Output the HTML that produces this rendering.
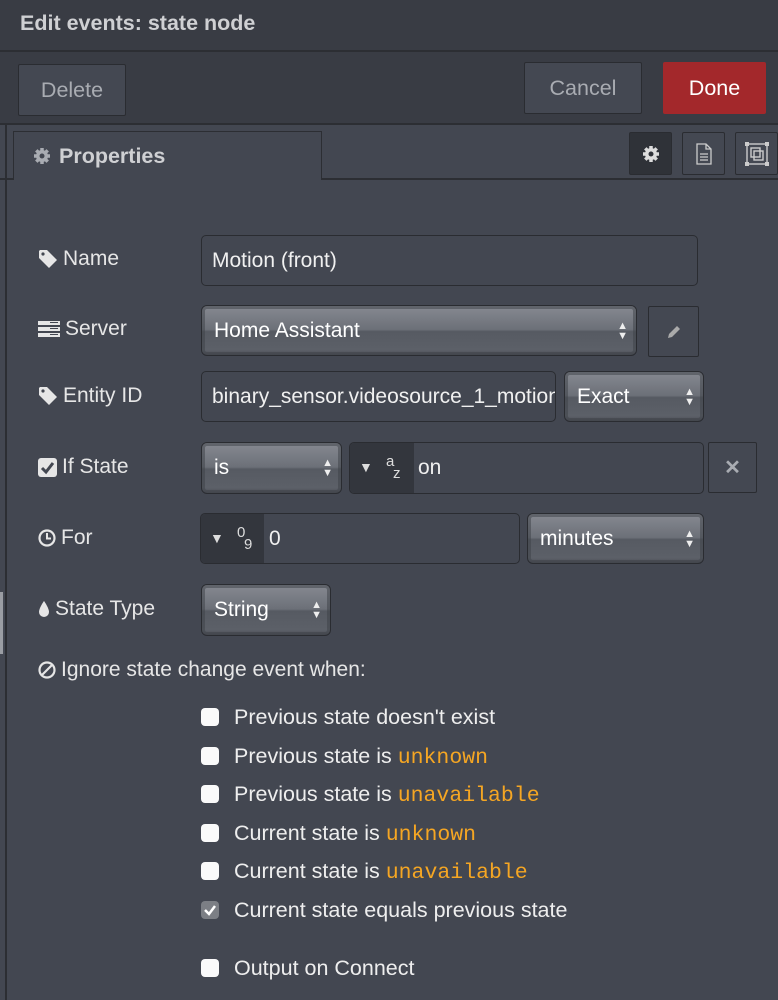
<!DOCTYPE html>
<html><head><meta charset="utf-8"><style>
*{box-sizing:border-box;margin:0;padding:0}
body{width:778px;height:1000px;background:#434751;font-family:"Liberation Sans",sans-serif;color:#e6e6e6;position:relative;overflow:hidden;font-size:21px}
.abs{position:absolute}
.hdr{left:0;top:0;width:778px;height:52px;background:#393c44;border-bottom:2px solid #2c2e33}
.bar{left:0;top:52px;width:778px;height:73px;background:#393c44;border-bottom:2px solid #2c2e33}
.btn{border:1px solid #2a2c31;background:#444852;color:#a9acb2;display:flex;align-items:center;justify-content:center;border-radius:2px;font-size:21.5px}
.lbl{left:38px;font-size:21px;color:#e6e6e6;display:flex;align-items:center;gap:5px;height:24px}
.inp{border:1px solid #2a2c31;border-radius:5px;background:#434751;display:flex;align-items:center;padding-left:10px;color:#f0f0f0;overflow:hidden;white-space:nowrap;font-size:21px}
.sel{border:1px solid #2a2c31;border-radius:6px;background:linear-gradient(#868991 0%,#6c7078 48%,#565a62 52%,#5c6068 90%,#4a4d55 100%);display:flex;align-items:center;padding-left:12px;color:#fff;box-shadow:inset 0 0 0 3px rgba(60,63,70,.5);font-size:21px}
.arr{position:absolute;right:8px;top:50%;transform:translateY(-50%);font-size:11px;line-height:10px;color:#eee;text-align:center}
.pre{background:#33363d;height:100%;display:flex;align-items:center;justify-content:center;color:#ddd;font-size:14px;position:relative}
.cb{left:201px;width:18px;height:18px;background:#fafafa;border-radius:4px}
.ct{left:234px;font-size:21.5px;color:#eee;height:24px;line-height:24px;white-space:nowrap}
.m{font-family:"Liberation Mono",monospace;color:#f5a623;font-size:21.5px}
</style></head><body>
<div class="abs" style="left:5px;top:0;width:2px;height:1000px;background:#2c2e33"></div>
<div class="abs" style="left:0;top:592px;width:3px;height:62px;background:#9a9da3"></div>
<div class="abs hdr"></div>
<div class="abs" style="left:20px;top:11px;font-weight:bold;font-size:21.5px;color:#cfd0d3">Edit events: state node</div>
<div class="abs bar"></div>
<div class="abs btn" style="left:18px;top:64px;width:108px;height:52px">Delete</div>
<div class="abs btn" style="left:524px;top:62px;width:118px;height:52px">Cancel</div>
<div class="abs btn" style="left:663px;top:62px;width:103px;height:52px;background:#a3282b;border-color:#a3282b;color:#fff">Done</div>
<div class="abs" style="left:0;top:178px;width:778px;height:2px;background:#2c2e33"></div>
<div class="abs" style="left:13px;top:131px;width:309px;height:49px;background:#434751;border:1px solid #2c2e33;border-bottom:none;display:flex;align-items:center;padding-left:19px;font-weight:bold;color:#cfd0d3;gap:8px;font-size:21.5px">
<svg width="18" height="18" viewBox="0 0 18 18"><g stroke="#a9acb2" stroke-width="3.5"><line x1="9" y1="1" x2="9" y2="17"/><line x1="1" y1="9" x2="17" y2="9"/><line x1="3.3" y1="3.3" x2="14.7" y2="14.7"/><line x1="14.7" y1="3.3" x2="3.3" y2="14.7"/></g><circle cx="9" cy="9" r="6" fill="#a9acb2"/><circle cx="9" cy="9" r="2.5" fill="#434751"/></svg>Properties</div>
<div class="abs btn" style="left:629px;top:132px;width:43px;height:43px;background:#2f3238"><svg width="18" height="18" viewBox="0 0 18 18"><g stroke="#ddd" stroke-width="3.5"><line x1="9" y1="1" x2="9" y2="17"/><line x1="1" y1="9" x2="17" y2="9"/><line x1="3.3" y1="3.3" x2="14.7" y2="14.7"/><line x1="14.7" y1="3.3" x2="3.3" y2="14.7"/></g><circle cx="9" cy="9" r="6" fill="#ddd"/><circle cx="9" cy="9" r="2.5" fill="#2f3238"/></svg></div>
<div class="abs btn" style="left:682px;top:132px;width:43px;height:43px"><svg width="16" height="22" viewBox="0 0 16 22"><path d="M1 1H10L15 6V21H1Z M10 1V6H15" fill="none" stroke="#ccc" stroke-width="1.3"/><path d="M4 11H12M4 14H12M4 17H12" stroke="#ccc" stroke-width="1.2"/></svg></div>
<div class="abs btn" style="left:735px;top:132px;width:43px;height:43px"><svg width="26" height="26" viewBox="0 0 26 26"><rect x="3" y="3" width="20" height="20" fill="none" stroke="#ccc" stroke-width="1.4"/><rect x="7" y="7" width="9" height="9" fill="none" stroke="#ccc" stroke-width="1.4"/><rect x="10" y="10" width="9" height="9" fill="none" stroke="#ccc" stroke-width="1.4"/><g fill="#ccc"><rect x="1" y="1" width="4" height="4"/><rect x="21" y="1" width="4" height="4"/><rect x="1" y="21" width="4" height="4"/><rect x="21" y="21" width="4" height="4"/></g></svg></div>

<div class="abs lbl" style="top:247px"><svg width="20" height="20" viewBox="0 0 20 20"><path d="M1 2V9L11 19L19 11L9 1H2Z" fill="#e6e6e6"/><circle cx="5" cy="5" r="1.6" fill="#434751"/></svg>Name</div>
<div class="abs inp" style="left:201px;top:235px;width:497px;height:51px">Motion (front)</div>

<div class="abs lbl" style="top:317px"><svg width="22" height="16" viewBox="0 0 22 16"><g fill="#e6e6e6"><rect x="0" y="0" width="22" height="4"/><rect x="0" y="6" width="22" height="4"/><rect x="0" y="12" width="22" height="4"/></g><g fill="#434751"><rect x="12" y="1" width="8" height="1"/><rect x="12" y="7" width="8" height="1"/><rect x="12" y="13" width="8" height="1"/></g></svg>Server</div>
<div class="abs sel" style="left:201px;top:305px;width:436px;height:51px">Home Assistant<div class="arr">▲<br>▼</div></div>
<div class="abs btn" style="left:648px;top:306px;width:51px;height:51px"><svg width="16" height="16" viewBox="0 0 16 16"><path d="M2 14L3 10L11 2L14 5L6 13Z" fill="#aaa"/></svg></div>

<div class="abs lbl" style="top:384px"><svg width="20" height="20" viewBox="0 0 20 20"><path d="M1 2V9L11 19L19 11L9 1H2Z" fill="#e6e6e6"/><circle cx="5" cy="5" r="1.6" fill="#434751"/></svg>Entity ID</div>
<div class="abs inp" style="left:201px;top:371px;width:355px;height:51px">binary_sensor.videosource_1_motion</div>
<div class="abs sel" style="left:564px;top:371px;width:140px;height:51px">Exact<div class="arr">▲<br>▼</div></div>

<div class="abs lbl" style="top:455px"><svg width="19" height="19" viewBox="0 0 19 19"><rect x="0" y="0" width="19" height="19" rx="3" fill="#e6e6e6"/><path d="M4 10L8 14L15 5" fill="none" stroke="#434751" stroke-width="3"/></svg>If State</div>
<div class="abs sel" style="left:201px;top:442px;width:141px;height:52px">is<div class="arr">▲<br>▼</div></div>
<div class="abs inp" style="left:349px;top:442px;width:355px;height:52px;padding-left:0"><div class="pre" style="width:64px"><span style="position:absolute;left:9px;top:16px">▼</span><span style="position:absolute;left:36px;top:10px;font-size:15px">a</span><span style="position:absolute;left:43px;top:22px;font-size:15px">z</span></div><span style="margin-left:4px">on</span></div>
<div class="abs btn" style="left:708px;top:442px;width:49px;height:51px;font-weight:bold;font-size:20px">✕</div>

<div class="abs lbl" style="top:526px"><svg width="18" height="18" viewBox="0 0 18 18"><circle cx="9" cy="9" r="7.5" fill="none" stroke="#e6e6e6" stroke-width="2.2"/><path d="M9 4V9.5H13" fill="none" stroke="#e6e6e6" stroke-width="2"/></svg>For</div>
<div class="abs inp" style="left:200px;top:513px;width:320px;height:51px;padding-left:0"><div class="pre" style="width:63px"><span style="position:absolute;left:9px;top:16px">▼</span><span style="position:absolute;left:36px;top:10px;font-size:15px">0</span><span style="position:absolute;left:43px;top:22px;font-size:15px">9</span></div><span style="margin-left:5px">0</span></div>
<div class="abs sel" style="left:527px;top:513px;width:177px;height:51px">minutes<div class="arr">▲<br>▼</div></div>

<div class="abs lbl" style="top:597px"><svg width="12" height="18" viewBox="0 0 12 18"><path d="M6 1C6 1 1 8 1 12A5 5 0 0 0 11 12C11 8 6 1 6 1Z" fill="#e6e6e6"/></svg>State Type</div>
<div class="abs sel" style="left:201px;top:584px;width:130px;height:52px">String<div class="arr">▲<br>▼</div></div>

<div class="abs lbl" style="top:658px"><svg width="18" height="18" viewBox="0 0 18 18"><circle cx="9" cy="9" r="7.5" fill="none" stroke="#e6e6e6" stroke-width="2.2"/><line x1="4" y1="14" x2="14" y2="4" stroke="#e6e6e6" stroke-width="2.2"/></svg>Ignore state change event when:</div>

<div class="abs cb" style="top:708px"></div><div class="abs ct" style="top:705px">Previous state doesn't exist</div>
<div class="abs cb" style="top:747px"></div><div class="abs ct" style="top:744px">Previous state is <span class="m">unknown</span></div>
<div class="abs cb" style="top:785px"></div><div class="abs ct" style="top:782px">Previous state is <span class="m">unavailable</span></div>
<div class="abs cb" style="top:824px"></div><div class="abs ct" style="top:821px">Current state is <span class="m">unknown</span></div>
<div class="abs cb" style="top:862px"></div><div class="abs ct" style="top:859px">Current state is <span class="m">unavailable</span></div>
<div class="abs cb" style="top:901px;background:#7c7f85"><svg width="18" height="18" viewBox="0 0 18 18"><path d="M4 9L8 13L14 5" fill="none" stroke="#fff" stroke-width="2.5"/></svg></div><div class="abs ct" style="top:898px">Current state equals previous state</div>
<div class="abs cb" style="top:959px"></div><div class="abs ct" style="top:956px">Output on Connect</div>
</body></html>
